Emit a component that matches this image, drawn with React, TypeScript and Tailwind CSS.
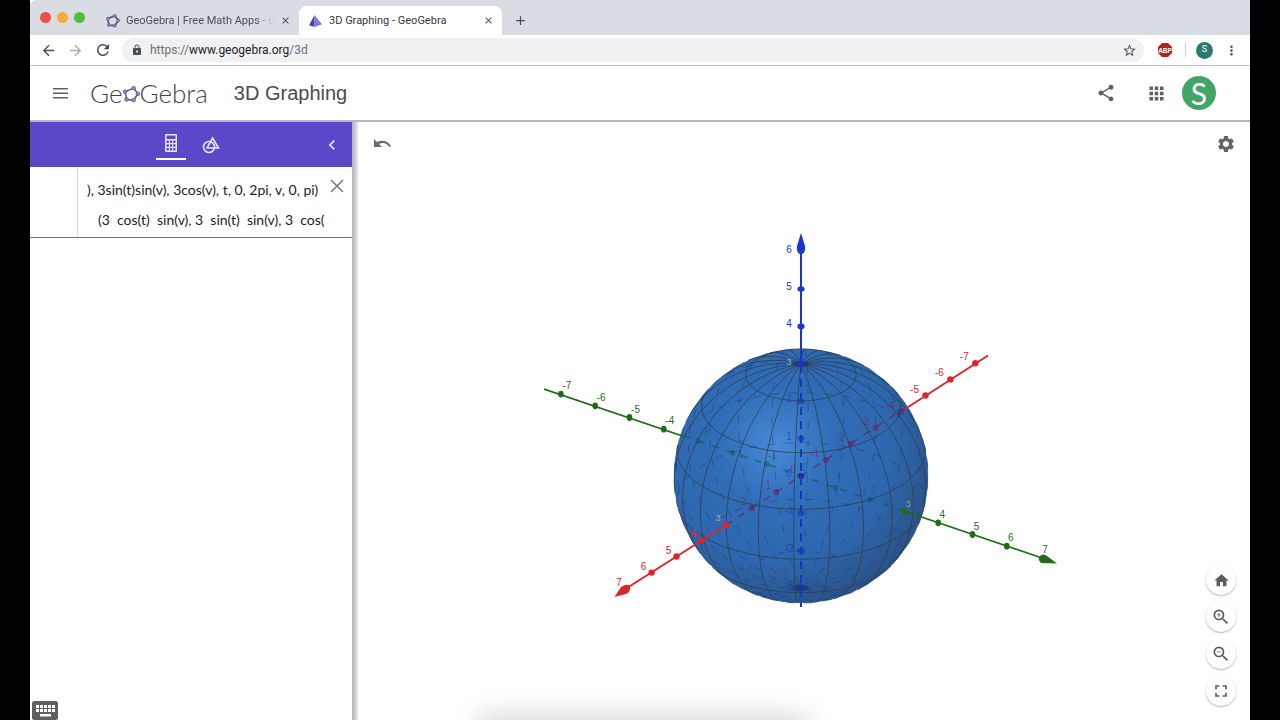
import type { ReactNode } from "react";
import {
  MdAdd,
  MdApps,
  MdArrowBack,
  MdArrowForward,
  MdChevronLeft,
  MdClose,
  MdFullscreen,
  MdHome,
  MdLock,
  MdMoreVert,
  MdRefresh,
  MdSettings,
  MdShare,
  MdStarBorder,
  MdZoomIn,
  MdZoomOut,
} from "react-icons/md";

type Point = [number, number];

const ORIGIN: Point = [801, 476];
const AXIS_X: Point = [-24.9, 16.1];
const AXIS_Y: Point = [34.3, 11.7];
const AXIS_Z: Point = [0, -37.4];
const VIEW = [0.717, 0.523, 0.463];
const RADIUS = 3;
const MERIDIANS = 22;
const PARALLELS = 7;

function project(x: number, y: number, z: number): Point {
  return [
    ORIGIN[0] + x * AXIS_X[0] + y * AXIS_Y[0] + z * AXIS_Z[0],
    ORIGIN[1] + x * AXIS_X[1] + y * AXIS_Y[1] + z * AXIS_Z[1],
  ];
}

function spherePoint(t: number, v: number) {
  return [
    RADIUS * Math.cos(t) * Math.sin(v),
    RADIUS * Math.sin(t) * Math.sin(v),
    RADIUS * Math.cos(v),
  ];
}

function curve(points: number[][], front: boolean) {
  let d = "";
  let pen = false;
  for (const [x, y, z] of points) {
    const facing = x * VIEW[0] + y * VIEW[1] + z * VIEW[2] >= 0;
    if (facing !== front) {
      pen = false;
      continue;
    }
    const [px, py] = project(x, y, z);
    d += `${pen ? "L" : "M"}${px.toFixed(1)} ${py.toFixed(1)}`;
    pen = true;
  }
  return d;
}

const curves: number[][][] = [];
for (let i = 0; i < MERIDIANS; i++) {
  const t = (i * 2 * Math.PI) / MERIDIANS;
  curves.push(Array.from({ length: 57 }, (_, k) => spherePoint(t, (k * Math.PI) / 56)));
}
for (let j = 1; j < PARALLELS; j++) {
  const v = (j * Math.PI) / PARALLELS;
  curves.push(Array.from({ length: 133 }, (_, k) => spherePoint((k * 2 * Math.PI) / 132, v)));
}
const frontMesh = curves.map((c) => curve(c, true)).join("");
const backMesh = curves.map((c) => curve(c, false)).join("");

const outline = Array.from({ length: 40 }, (_, k) => {
  const a = ((k + 0.5) * 2 * Math.PI) / 40;
  return `${(801 + 127 * Math.cos(a)).toFixed(1)},${(476 + 127 * Math.sin(a)).toFixed(1)}`;
}).join(" ");

interface AxisProps {
  axis: Point;
  color: string;
  ticks: number[];
  labelAt: (n: number) => Point;
  dot: Point;
  faded?: boolean;
}

function Ticks({ axis, color, ticks, labelAt, dot, faded }: AxisProps) {
  return (
    <g fill={color} opacity={faded ? 0.55 : 1}>
      {ticks.map((n) => {
        const x = ORIGIN[0] + n * axis[0];
        const y = ORIGIN[1] + n * axis[1];
        const [dx, dy] = labelAt(n);
        return (
          <g key={n}>
            <ellipse cx={x} cy={y} rx={dot[0]} ry={dot[1]} />
            <text x={x + dx} y={y + dy} textAnchor="middle" fontSize="10">
              {n}
            </text>
          </g>
        );
      })}
    </g>
  );
}

const RED = "#d9262b";
const GREEN = "#1f6b16";
const BLUE = "#1a34cf";
const labelX = (n: number): Point => [n < 0 ? -11 : -8, -3];
const labelY = (n: number): Point => [n < 0 ? 6 : 4, -5];
const labelZ = (): Point => [-12, 1];

function Plot() {
  return (
    <svg
      viewBox="544 229 520 384"
      className="h-[384px] w-[520px] shrink-0 font-['Liberation_Sans',sans-serif]"
      role="img"
      aria-label="Sphere of radius 3"
    >
      <defs>
        <radialGradient id="ball" gradientUnits="userSpaceOnUse" cx="776" cy="446" r="165">
          <stop offset="0" stopColor="#4a8ad6" />
          <stop offset="0.18" stopColor="#3c7bc7" />
          <stop offset="0.36" stopColor="#316db8" />
          <stop offset="0.7" stopColor="#2e67ae" />
          <stop offset="1" stopColor="#2b5288" />
        </radialGradient>
      </defs>

      <path d="M801 602V607" stroke={BLUE} strokeWidth="2" />
      <polygon points={outline} fill="url(#ball)" stroke="#2a578f" strokeWidth="0.8" />
      <path d={backMesh} fill="none" stroke="#1d3f73" strokeWidth="0.9" strokeDasharray="8 10" opacity="0.6" />

      <path d="M684 436L904 511" stroke="#1b5c6b" strokeWidth="1.6" strokeDasharray="7 8" opacity="0.8" />
      <path d="M726 525L905 408" stroke="#5b2f70" strokeWidth="1.6" strokeDasharray="7 8" opacity="0.8" />
      <Ticks axis={AXIS_Y} color="#12596a" ticks={[-3, -2, -1, 0, 1, 2]} labelAt={labelY} dot={[2.6, 3.2]} faded />
      <Ticks axis={AXIS_X} color="#7a1150" ticks={[-4, -3, -2, -1, 0, 1, 2]} labelAt={labelX} dot={[3, 3]} faded />
      <Ticks axis={AXIS_Z} color="#0d2bc0" ticks={[-3, -2, -1, 0, 1, 2]} labelAt={labelZ} dot={[3.6, 2.8]} faded />
      <ellipse cx="801" cy="588" rx="8" ry="3.5" fill="#173a7c" opacity="0.8" />
      <path d="M801 365V604" stroke="#1238c4" strokeWidth="2" strokeDasharray="8 6" />

      <path d={frontMesh} fill="none" stroke="#2c3f50" strokeWidth="0.8" />
      <ellipse cx="801" cy="364" rx="8" ry="3" fill="#203a66" opacity="0.8" />

      <path d="M801 248V364" stroke={BLUE} strokeWidth="2" />
      <path d="M801 233L797 246Q796 253 801 254.500Q806 253 805 246Z" fill={BLUE} />
      <Ticks axis={AXIS_Z} color={BLUE} ticks={[4, 5]} labelAt={labelZ} dot={[3.6, 2.8]} />
      <ellipse cx="801" cy="364" rx="3" ry="2.5" fill={BLUE} />
      <text x="789" y="253" textAnchor="middle" fontSize="10" fill={BLUE}>6</text>
      <text x="789" y="365" textAnchor="middle" fontSize="9" fill="#8fa4f2">3</text>

      <path d="M905 409L988 355.500M726 525L627 588" stroke={RED} strokeWidth="2" />
      <path d="M614.500 597L621 587Q627 583 630 586Q631 592 626 594Z" fill={RED} />
      <Ticks axis={AXIS_X} color={RED} ticks={[-7, -6, -5, 4, 5, 6]} labelAt={labelX} dot={[3.2, 3.2]} />
      <circle cx="726" cy="525" r="3.200" fill={RED} />
      <text x="619" y="586" textAnchor="middle" fontSize="10" fill={RED}>7</text>
      <text x="718" y="521" textAnchor="middle" fontSize="9" fill="#ee8a9b">3</text>

      <path d="M544 389L684 436.500M904 511L1042 558" stroke={GREEN} strokeWidth="1.800" />
      <path d="M1057 563.500L1041 563Q1037 559 1040 556Q1043 553 1047 556Z" fill={GREEN} />
      <Ticks axis={AXIS_Y} color={GREEN} ticks={[-7, -6, -5, -4, 4, 5, 6]} labelAt={labelY} dot={[2.8, 3.4]} />
      <ellipse cx="904" cy="511" rx="3" ry="3.200" fill={GREEN} />
      <text x="1045" y="553" textAnchor="middle" fontSize="10" fill={GREEN}>7</text>
      <text x="908" y="507" textAnchor="middle" fontSize="9" fill="#79b58d">3</text>
    </svg>
  );
}

function RingLogo({ className, dark }: { className: string; dark?: boolean }) {
  const dots: Point[] = [[15, 3], [21, 11], [15, 20], [5, 19], [3, 8]];
  return (
    <svg viewBox="0 0 24 24" className={className} aria-hidden="true">
      <path
        d="M15 3L21 11L15 20L5 19L3 8Z"
        strokeLinejoin="round"
        fill="none"
        stroke="#5a5a66"
        strokeWidth={dark ? 3 : 2.2}
      />
      {dots.map(([x, y]) => (
        <circle key={`${x}-${y}`} cx={x} cy={y} r="2.600" fill="#8f8ae0" stroke="#55556e" strokeWidth="1" />
      ))}
    </svg>
  );
}

function RoundButton({ label, children }: { label: string; children: ReactNode }) {
  return (
    <button
      type="button"
      aria-label={label}
      className="flex size-[30px] items-center justify-center rounded-full bg-white text-[#5c5c5c] shadow-[0_1px_2px_rgba(0,0,0,0.3)]"
    >
      {children}
    </button>
  );
}

function BrowserTabs() {
  return (
    <div className="flex h-[35px] items-end rounded-tl-md bg-[#d9dce3] font-['Roboto',sans-serif] text-[11px] text-[#4b4e53]">
      <div className="flex h-full w-[69px] items-center gap-[6px] pl-[10px]">
        <span className="size-[11px] rounded-full bg-[#ee4d48]" />
        <span className="size-[11px] rounded-full bg-[#f6ad36]" />
        <span className="size-[11px] rounded-full bg-[#4fbe38]" />
      </div>
      <div className="flex h-[29px] w-[200px] items-center pr-[8px] pl-[7px]">
        <RingLogo className="mr-[6px] size-[14px] shrink-0" dark />
        <a
          href="#home"
          className="min-w-0 flex-1 overflow-hidden pt-px whitespace-nowrap [mask-image:linear-gradient(to_right,black_88%,transparent)]"
        >
          GeoGebra | Free Math Apps - u
        </a>
        <button type="button" aria-label="Close tab" className="ml-[6px]">
          <MdClose size={11} />
        </button>
      </div>
      <div className="flex h-[29px] w-[203px] items-center rounded-t-lg bg-white pr-[8px] pl-[10px]">
        <svg viewBox="0 0 14 14" className="mr-[7px] size-[13px] shrink-0" aria-hidden="true">
          <path d="M6 1L0 12L6 14Z" fill="#4a45a8" />
          <path d="M6 1L6 14L14 11Z" fill="#7f7adb" />
        </svg>
        <a href="#graph" className="flex-1 pt-px whitespace-nowrap text-[#35373b]">
          3D Graphing - GeoGebra
        </a>
        <button type="button" aria-label="Close tab">
          <MdClose size={11} />
        </button>
      </div>
      <button type="button" aria-label="New tab" className="ml-[11px] flex h-[29px] items-center">
        <MdAdd size={15} />
      </button>
    </div>
  );
}

function AddressBar() {
  return (
    <div className="flex h-[31px] items-center border-b border-[#bdbfc2] bg-white pr-[11px] pl-[10px] text-[#4b4e53]">
      <button type="button" aria-label="Back">
        <MdArrowBack size={17} />
      </button>
      <button type="button" aria-label="Forward" className="ml-[10px] text-[#a9abae]">
        <MdArrowForward size={17} />
      </button>
      <button type="button" aria-label="Reload" className="ml-[10px]">
        <MdRefresh size={18} />
      </button>
      <div className="ml-[10px] flex h-[24px] flex-1 items-center rounded-full bg-[#eff1f3] pr-[7px] pl-[9px]">
        <MdLock size={12} />
        <a href="#graph" className="ml-[7px] flex-1 font-['Roboto',sans-serif] text-[12px] text-[#6d7074]">
          https://<span className="text-[#1f2023]">www.geogebra.org</span>/3d
        </a>
        <button type="button" aria-label="Bookmark">
          <MdStarBorder size={15} />
        </button>
      </div>
      <button type="button" aria-label="ABP" className="ml-[13px] flex items-center">
        <svg viewBox="0 0 16 16" className="size-[16px]">
          <path d="M5 1H11L15 5V11L11 15H5L1 11V5Z" fill="#b9201c" />
          <text x="8" y="10.500" textAnchor="middle" fontSize="6.500" fontWeight="700" fill="#fff" className="font-['Liberation_Sans',sans-serif]">
            ABP
          </text>
        </svg>
      </button>
      <span className="ml-[12px] h-[14px] w-px bg-[#d0d2d5]" />
      <button
        type="button"
        className="ml-[10px] flex size-[17px] items-center justify-center rounded-full bg-[#287b6d] font-['Roboto',sans-serif] text-[9px] text-white"
      >
        S
      </button>
      <button type="button" aria-label="Browser menu" className="ml-[11px]">
        <MdMoreVert size={15} />
      </button>
    </div>
  );
}

function AppHeader() {
  return (
    <header className="relative z-10 flex h-[56px] items-center border-b-2 border-[#b7b7b9] bg-white pr-[34px] pl-[23px] text-[#5f5f5f]">
      <button type="button" aria-label="Menu">
        <svg viewBox="0 0 15 12" className="h-[12px] w-[15px]" fill="#606060">
          <path d="M0 1h15v1.500H0zM0 5.500h15V7H0zM0 10h15v1.500H0z" />
        </svg>
      </button>
      <a
        href="#home"
        className="ml-[22px] flex items-center font-['Lato',sans-serif] text-[26px] leading-none font-light text-[#444]"
      >
        Ge
        <RingLogo className="mt-[3px] size-[17px]" />
        Gebra
      </a>
      <h1 className="ml-[26px] flex-1 font-['Liberation_Sans',sans-serif] text-[20px] text-[#4c4c4c]">
        3D Graphing
      </h1>
      <button type="button" aria-label="Share">
        <MdShare size={20} />
      </button>
      <button type="button" aria-label="Apps" className="ml-[30px]">
        <MdApps size={21} />
      </button>
      <button
        type="button"
        className="ml-[15px] flex size-[34px] items-center justify-center rounded-full bg-[#42a567] font-['Lato',sans-serif] text-[30px] leading-none text-white"
      >
        S
      </button>
    </header>
  );
}

function AlgebraPanel() {
  return (
    <aside className="flex w-[322px] shrink-0 flex-col bg-white">
      <nav className="flex h-[45px] items-center justify-end bg-[#5949c8] pr-[10px] text-[#e9e6fb]">
        <button
          type="button"
          aria-label="Algebra"
          className="flex h-[30px] w-[30px] flex-col items-center justify-between border-b-2 border-white pt-[4px]"
        >
          <svg viewBox="0 0 14 18" className="h-[18px] w-[14px]">
            <path
              fill="currentColor"
              fillRule="evenodd"
              d="M2 0H12Q13 0 13 1V17Q13 18 12 18H2Q1 18 1 17V1Q1 0 2 0ZM2.500 1.500V5H11.500V1.500ZM2.500 6.500V9H4.800V6.500ZM5.900 6.500V9H8.100V6.500ZM9.200 6.500V9H11.500V6.500ZM2.500 10.200V12.700H4.800V10.200ZM5.900 10.200V12.700H8.100V10.200ZM9.200 10.200V12.700H11.500V10.200ZM2.500 14V16.500H4.800V14ZM5.900 14V16.500H8.100V14ZM9.200 14V16.500H11.500V14Z"
            />
          </svg>
        </button>
        <button type="button" aria-label="Tools" className="ml-[16px]">
          <svg viewBox="0 0 18 18" className="size-[18px]" fill="none" stroke="currentColor" strokeWidth="1.600">
            <circle cx="7" cy="11" r="5.500" />
            <path d="M10.500 2L16.500 12H5Z" />
          </svg>
        </button>
        <button type="button" aria-label="Collapse" className="ml-[102px]">
          <MdChevronLeft size={20} />
        </button>
      </nav>
      <div className="flex h-[71px] border-b border-[#7a5fae]">
        <div className="w-[48px] border-r border-[#dcdcdc]" />
        <div className="flex min-w-0 flex-1 flex-col pt-[7px] pl-[9px] font-['Lato',sans-serif] text-[14px] text-[#222]">
          <div className="flex h-[30px] items-center">
            <input
              aria-label="Expression"
              defaultValue="), 3sin(t)sin(v), 3cos(v), t, 0, 2pi, v, 0, pi)"
              ref={(el) => {
                if (el) el.scrollLeft = el.scrollWidth;
              }}
              className="w-[234px] min-w-0 outline-none"
            />
            <button type="button" aria-label="Delete" className="ml-[8px] text-[#777]">
              <svg viewBox="0 0 16 16" className="mb-[6px] size-[16px]" stroke="currentColor" strokeWidth="1.500">
                <path d="M2 2L14 14M14 2L2 14" />
              </svg>
            </button>
          </div>
          <output className="ml-[11px] h-[32px] w-[231px] overflow-hidden leading-[31px] whitespace-pre">
            {"(3  cos(t)  sin(v), 3  sin(t)  sin(v), 3  cos("}
          </output>
        </div>
      </div>
      <button type="button" aria-label="Keyboard" className="mt-auto ml-[2px] text-[#606060]">
        <svg viewBox="0 0 26 19" className="h-[19px] w-[26px]">
          <rect width="26" height="19" rx="2.500" fill="currentColor" />
          {[0, 1, 2, 3, 4].map((c) => (
            <path key={c} d={`M${4 + c * 4} 4h3v3h-3zM${4 + c * 4} 8h3v3h-3z`} fill="#fff" />
          ))}
          <path d="M8 13h11v2.500H8z" fill="#fff" />
        </svg>
      </button>
    </aside>
  );
}

function GraphicsView() {
  return (
    <main className="relative flex min-w-0 flex-1 items-center justify-center overflow-hidden bg-white">
      <Plot />
      <button type="button" aria-label="Undo" className="absolute top-[14px] left-[15px] text-[#6a6a6a]">
        <svg viewBox="0 0 18 14" className="h-[14px] w-[18px]">
          <path d="M1 3V11H9L6 8Q12 5 16.500 11L18 10Q13 2 4 6Z" fill="currentColor" />
        </svg>
      </button>
      <button type="button" aria-label="Settings" className="absolute top-[12px] right-[14px] text-[#666]">
        <MdSettings size={20} />
      </button>
      <div className="absolute right-[14px] bottom-[14px] flex flex-col gap-[7px]">
        <RoundButton label="Home view">
          <MdHome size={17} />
        </RoundButton>
        <RoundButton label="Zoom in">
          <MdZoomIn size={20} />
        </RoundButton>
        <RoundButton label="Zoom out">
          <MdZoomOut size={20} />
        </RoundButton>
        <RoundButton label="Fullscreen">
          <MdFullscreen size={20} />
        </RoundButton>
      </div>
      <div className="absolute -bottom-[16px] left-[128px] h-[10px] w-[312px] shadow-[0_0_30px_8px_rgba(0,0,0,0.2)]" />
    </main>
  );
}

export default function App() {
  return (
    <div className="min-h-screen bg-black px-[30px]">
      <div className="flex min-h-screen flex-col bg-white">
        <BrowserTabs />
        <AddressBar />
        <AppHeader />
        <div className="flex flex-1">
          <AlgebraPanel />
          <div className="w-[6px] shrink-0 bg-linear-to-r from-[#b4b4b8] to-[#e4e4e6]" />
          <GraphicsView />
        </div>
      </div>
    </div>
  );
}
